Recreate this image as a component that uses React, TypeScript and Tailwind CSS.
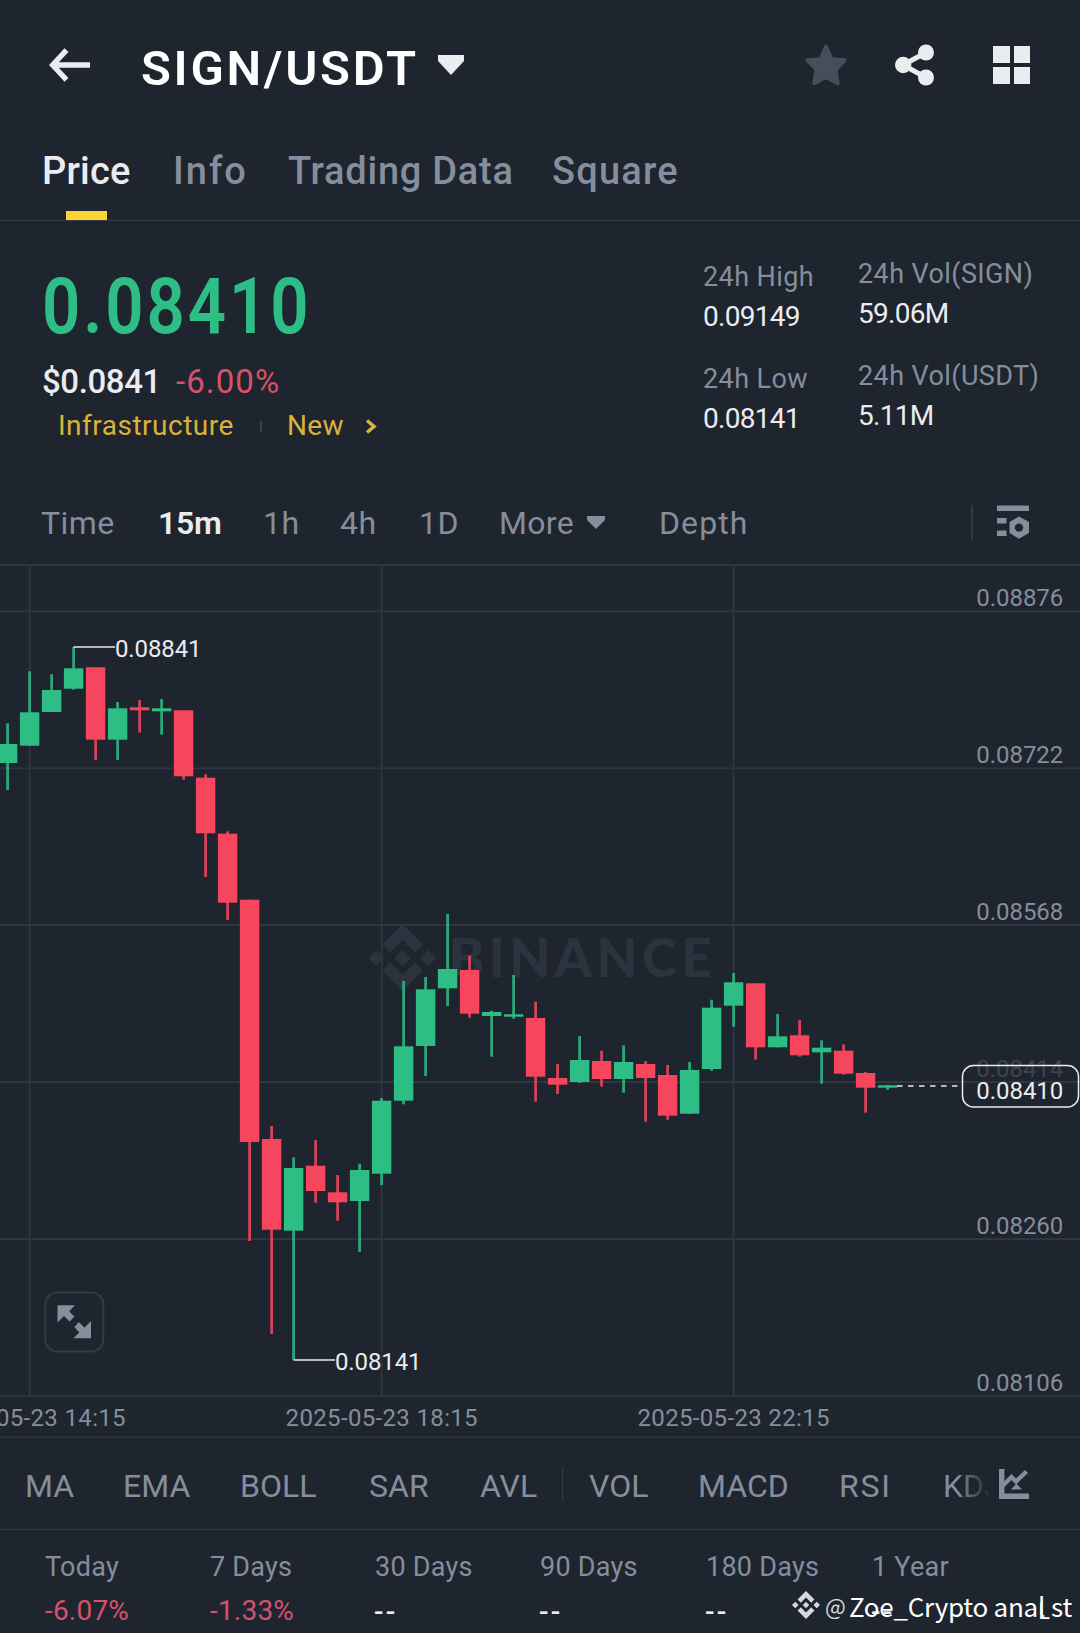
import React, { useState } from "react";

const UP = "#2ebd85";
const DOWN = "#f6465d";

type Candle = {
  up: boolean;
  high: number;
  top: number;
  bottom: number;
  low: number;
};

const c = (up: number, high: number, top: number, bottom: number, low: number): Candle => ({
  up: up === 1,
  high,
  top,
  bottom,
  low,
});

// y values are in chart space, one candle every 22 units
const candles: Candle[] = [
  c(1, 723.3, 744, 763, 790),
  c(1, 671.3, 712.3, 745.7, 745.7),
  c(1, 674.3, 690, 712, 712),
  c(1, 647, 668.3, 688.7, 689.7),
  c(0, 667.3, 667.3, 739.7, 760),
  c(1, 702, 708.3, 739.7, 760),
  c(0, 700, 707.3, 710.3, 732.7),
  c(1, 699, 708.3, 711.3, 734.7),
  c(0, 710.3, 710.3, 776.3, 779.7),
  c(0, 774.3, 777.7, 833.3, 877),
  c(0, 831.3, 833.7, 902.7, 920),
  c(0, 899.7, 899.7, 1142, 1241),
  c(0, 1126, 1139, 1229.7, 1334),
  c(1, 1157.3, 1168, 1230.7, 1360),
  c(0, 1140, 1165.7, 1191, 1202.7),
  c(0, 1175, 1192.3, 1202.3, 1220.7),
  c(1, 1163.7, 1170, 1201, 1252),
  c(1, 1098, 1100.7, 1173.7, 1185),
  c(1, 981, 1046.3, 1100.7, 1104.3),
  c(1, 977, 989.3, 1046, 1076),
  c(1, 914, 969, 988.3, 1006),
  c(0, 955.7, 970, 1013.7, 1017.7),
  c(1, 1010.7, 1012, 1016, 1056.7),
  c(1, 975, 1014.3, 1016.7, 1018.7),
  c(0, 1001.7, 1018, 1076.7, 1101.7),
  c(0, 1064, 1078, 1084.7, 1094),
  c(1, 1036, 1060, 1082, 1083),
  c(0, 1050.7, 1061, 1079, 1086.7),
  c(1, 1045.3, 1062, 1079, 1092.7),
  c(0, 1061, 1064, 1078, 1121.7),
  c(0, 1065, 1075, 1115.7, 1119.7),
  c(1, 1062, 1070, 1113.7, 1113.7),
  c(1, 999.7, 1007.7, 1069, 1070.7),
  c(1, 973, 982.3, 1005.7, 1026.7),
  c(0, 983.3, 983.3, 1047.3, 1059.7),
  c(1, 1014, 1036.3, 1047.3, 1047.3),
  c(0, 1020, 1035.3, 1055.3, 1056.7),
  c(1, 1040.3, 1047.7, 1052.3, 1083.7),
  c(0, 1044.3, 1050.7, 1073.7, 1074.7),
  c(0, 1072, 1073, 1087.7, 1112.7),
  c(1, 1085.3, 1085.3, 1087.7, 1089.7),
];

const gridRows = [
  { y: 611.3, label: "0.08876" },
  { y: 768.3, label: "0.08722" },
  { y: 925, label: "0.08568" },
  { y: 1082, label: "0.08414" },
  { y: 1239, label: "0.08260" },
  { y: 1396, label: "0.08106" },
];

const gridCols = [
  { x: 29.6, label: "2025-05-23 14:15" },
  { x: 381.6, label: "2025-05-23 18:15" },
  { x: 733.5, label: "2025-05-23 22:15" },
];

const tabs = [
  { name: "Price", box: "w-[131px]", text: "tracking-[0.2px]" },
  { name: "Info", box: "w-[115px]", text: "tracking-[2px]" },
  { name: "Trading Data", box: "w-[264px]", text: "tracking-[0.75px]" },
  { name: "Square", box: "w-[140px]", text: "tracking-[1.2px]" },
];

const intervals = [
  { name: "Time", box: "w-[117px]" },
  { name: "15m", box: "w-[105px]" },
  { name: "1h", box: "w-[77px]" },
  { name: "4h", box: "w-[79px]" },
  { name: "1D", box: "w-[80px]" },
];

const mainIndicators = [
  { name: "MA", box: "w-[98px]" },
  { name: "EMA", box: "w-[117px]" },
  { name: "BOLL", box: "w-[129px]" },
  { name: "SAR", box: "w-[111px]" },
  { name: "AVL", box: "w-[82px]" },
];

const subIndicators = [
  { name: "VOL", box: "w-[109px]" },
  { name: "MACD", box: "w-[141px]" },
  { name: "RSI", box: "w-[104px] tracking-[1.8px]" },
];

const periods = [
  { name: "Today", value: "-6.07%", box: "w-[165px]" },
  { name: "7 Days", value: "-1.33%", box: "w-[165px]" },
  { name: "30 Days", value: "--", box: "w-[165px]" },
  { name: "90 Days", value: "--", box: "w-[166px]" },
  { name: "180 Days", value: "--", box: "w-[166px]" },
  { name: "1 Year", value: "--", box: "w-[100px]" },
];

function BinanceMark({ className }: { className?: string }) {
  return (
    <svg viewBox="0 0 68 68" className={className} fill="currentColor">
      <path d="M34 0 L54.5 20.5 L46.5 28.5 L34 16 L21.5 28.5 L13.5 20.5 Z" />
      <path d="M34 68 L54.5 47.5 L46.5 39.5 L34 52 L21.5 39.5 L13.5 47.5 Z" />
      <path d="M34 26 L42 34 L34 42 L26 34 Z" />
      <path d="M8 26 L16 34 L8 42 L0 34 Z" />
      <path d="M60 26 L68 34 L60 42 L52 34 Z" />
    </svg>
  );
}

function Caret({ className }: { className?: string }) {
  return (
    <svg viewBox="0 0 26 20" className={className} fill="currentColor" preserveAspectRatio="none">
      <path d="M0 0 H26 V6 L13 20 L0 6 Z" />
    </svg>
  );
}

function Header() {
  return (
    <header className="flex h-[130px] items-center pl-[49px] pr-[50px]">
      <svg viewBox="0 0 41 34" className="h-[34px] w-[41px] shrink-0 text-[#eaecef]" fill="none" stroke="currentColor" strokeWidth="5.4">
        <path d="M41 17 H4 M17.5 2.2 L3.6 17 L17.5 31.8" />
      </svg>
      <h1 className="ml-[51px] w-[297px] whitespace-nowrap pt-[6px] text-[49px] font-semibold leading-none tracking-[2.7px] text-white">
        SIGN/USDT
      </h1>
      <Caret className="h-5 w-[26px] text-[#eaecef]" />
      <div className="ml-auto flex items-center">
        <svg viewBox="0 0 42 42" className="h-[42px] w-[42px] text-[#474d5a]" fill="currentColor" stroke="currentColor" strokeWidth="4" strokeLinejoin="round">
          <path d="M21 2.5 L26.5 15.2 L39.6 16.2 L30.5 25.6 L32.7 39.2 L21 33 L9.3 39.2 L11.5 25.6 L2.4 16.2 L15.5 15.2 Z" />
        </svg>
        <svg viewBox="0 0 40 42" className="ml-12 h-[42px] w-10 text-[#eaecef]" fill="currentColor" stroke="currentColor">
          <path d="M31 8.5 L8 21 L31 33.5" fill="none" strokeWidth="5" />
          <circle cx="31" cy="8.5" r="8" stroke="none" />
          <circle cx="8.2" cy="21" r="8.2" stroke="none" />
          <circle cx="31" cy="33.5" r="8" stroke="none" />
        </svg>
        <div className="ml-[58px] grid grid-cols-2 gap-1">
          <span className="h-[17px] w-[16.5px] bg-[#eaecef]" />
          <span className="h-[17px] w-[16.5px] bg-[#eaecef]" />
          <span className="h-[17px] w-[16.5px] bg-[#eaecef]" />
          <span className="h-[17px] w-[16.5px] bg-[#eaecef]" />
        </div>
      </div>
    </header>
  );
}

function Tabs() {
  const [active, setActive] = useState("Price");
  return (
    <nav className="flex h-[91px] border-b border-[#333b47] pl-[42px]">
      {tabs.map((tab) => (
        <button
          key={tab.name}
          onClick={() => setActive(tab.name)}
          className={`flex flex-col items-start text-left ${tab.box}`}
        >
          <span className="flex flex-col items-center">
            <span
              className={`flex h-[81px] items-center whitespace-nowrap pt-[2px] text-[38px] font-medium ${tab.text} ${
                active === tab.name ? "text-[#eaecef]" : "text-[#848e9c]"
              }`}
            >
              {tab.name}
            </span>
            {active === tab.name && <span className="h-[9px] w-[41px] bg-[#fcd535]" />}
          </span>
        </button>
      ))}
    </nav>
  );
}

function Stat({ label, value }: { label: string; value: string }) {
  return (
    <div className="h-[102px] whitespace-nowrap">
      <div className="text-[27px] leading-10 tracking-[0.4px] text-[#848e9c]">{label}</div>
      <div className="text-[28px] leading-10 tracking-[-0.7px] text-[#eaecef]">{value}</div>
    </div>
  );
}

function PriceSummary() {
  return (
    <section className="flex h-[259px] pl-[42px]">
      <div className="w-[661px] pt-[46px]">
        <div className="h-20 origin-left scale-x-[0.86] whitespace-nowrap text-[78px] font-semibold leading-[80px] tracking-[3.4px] text-[#2ebd85]">
          0.08410
        </div>
        <div className="mt-[6px] flex h-12 items-center pt-[10px] text-[33px]">
          <span className="w-[134px] font-medium tracking-[-0.4px] text-[#eaecef]">$0.0841</span>
          <span className="tracking-[1.1px] text-[#d9506a]">-6.00%</span>
        </div>
        <div className="mt-[3px] flex h-10 items-center pl-4 pt-1 text-[28px] text-[#d9b23a]">
          <span className="w-[202px] tracking-[0.5px]">Infrastructure</span>
          <span className="h-[11px] w-[2px] bg-[#3a424e]" />
          <span className="ml-[25px] w-[78px] tracking-[0.3px]">New</span>
          <svg viewBox="0 0 12 15" className="h-[15px] w-3" fill="none" stroke="currentColor" strokeWidth="3.6">
            <path d="M2 1.5 L9 7.5 L2 13.5" />
          </svg>
        </div>
      </div>
      <div className="w-[155px] pt-[36px]">
        <Stat label="24h High" value="0.09149" />
        <Stat label="24h Low" value="0.08141" />
      </div>
      <div className="pt-[33px]">
        <Stat label="24h Vol(SIGN)" value="59.06M" />
        <Stat label="24h Vol(USDT)" value="5.11M" />
      </div>
    </section>
  );
}

function IntervalBar() {
  const [active, setActive] = useState("15m");
  return (
    <div className="flex h-[84px] items-center pl-[41px] pr-[51px] text-[32px] text-[#848e9c]">
      {intervals.map((item) => (
        <button
          key={item.name}
          onClick={() => setActive(item.name)}
          className={`pt-[2px] text-left ${item.box} ${
            active === item.name ? "font-semibold tracking-[-0.3px] text-[#eaecef]" : "tracking-[0.4px]"
          }`}
        >
          {item.name}
        </button>
      ))}
      <span className="w-[88px] pt-[2px] tracking-[0.3px]">More</span>
      <Caret className="h-[13px] w-[18px]" />
      <span className="ml-[54px] pt-[2px] tracking-[1.1px]">Depth</span>
      <span className="ml-auto h-[34px] w-[2px] bg-[#333b47]" />
      <svg viewBox="0 0 32 34" className="ml-6 h-[34px] w-8" fill="currentColor">
        <path d="M0 0.5 H32 V6 H0 Z M0 13 H9.5 V18.5 H0 Z M0 25.5 H9.5 V31 H0 Z" />
        <path
          fillRule="evenodd"
          d="M22 11.5 L32 17 V28 L22 33.8 L12.5 28 V17 Z M22 18.4 A4.2 4.2 0 1 0 22 26.8 A4.2 4.2 0 1 0 22 18.4 Z"
        />
      </svg>
    </div>
  );
}

function CandleChart() {
  return (
    <svg viewBox="0 564 1080 874" className="block h-[874px] w-full" fontFamily="Roboto, sans-serif" fontSize="24">
      {/* grid */}
      <g stroke="#2f3641" strokeWidth="1.8">
        <line x1="0" x2="1080" y1="564.9" y2="564.9" />
        {gridRows.map((row) => (
          <line key={row.label} x1="0" x2="1080" y1={row.y} y2={row.y} />
        ))}
        {gridCols.map((col) => (
          <line key={col.label} x1={col.x} x2={col.x} y1="565" y2="1396" />
        ))}
        <line x1="0" x2="1080" y1="1437.2" y2="1437.2" strokeWidth="1.4" />
      </g>

      {/* brand behind the candles */}
      <g fill="#2d333e">
        <g transform="translate(368.5 924)">
          <path d="M34 0 L54.5 20.5 L46.5 28.5 L34 16 L21.5 28.5 L13.5 20.5 Z" />
          <path d="M34 67 L54.5 46.5 L46.5 38.5 L34 51 L21.5 38.5 L13.5 46.5 Z" />
          <path d="M34 26 L42 34 L34 42 L26 34 Z M8 26 L16 34 L8 42 L0 34 Z M60 26 L68 34 L60 42 L52 34 Z" />
        </g>
        <text x="449" y="977.3" fontFamily="Lato, sans-serif" fontWeight="900" fontSize="53" textLength="263">
          BINANCE
        </text>
      </g>

      {/* axis labels */}
      <g fill="#848e9c">
        {gridRows.map((row) => (
          <text
            key={row.label}
            x="976.3"
            y={row.y - 5.4}
            textLength="87"
            fill={row.label === "0.08414" ? "#3d4450" : "#848e9c"}
          >
            {row.label}
          </text>
        ))}
        {gridCols.map((col) => (
          <text key={col.label} x={col.x - 96} y="1426" textLength="192">
            {col.label}
          </text>
        ))}
      </g>

      {candles.map((k, i) => {
        const x = 7.6 + i * 22;
        return (
          <g key={i} fill={k.up ? UP : DOWN}>
            <rect x={x - 1.4} y={k.high} width="2.8" height={k.low - k.high} opacity="0.85" />
            <rect x={x - 9.7} y={k.top} width="19.4" height={k.bottom - k.top} />
          </g>
        );
      })}

      {/* high and low callouts */}
      <g stroke="#eaecef" strokeWidth="1.5">
        <line x1="73.6" x2="115" y1="647" y2="647" />
        <line x1="293.6" x2="335" y1="1360" y2="1360" />
      </g>
      <g fill="#eaecef">
        <text x="115" y="657" textLength="86.5">
          0.08841
        </text>
        <text x="335" y="1370" textLength="86.5">
          0.08141
        </text>
      </g>

      {/* last price */}
      <line x1="897" x2="960" y1="1086" y2="1086" stroke="#eaecef" strokeWidth="1.6" strokeDasharray="5.5 5.5" />
      <rect x="962.5" y="1065.5" width="116" height="41.5" rx="11" fill="none" stroke="#eaecef" strokeWidth="1.5" />
      <text x="976.3" y="1099.2" textLength="87" fill="#eaecef">
        0.08410
      </text>

      {/* expand */}
      <rect x="45.3" y="1292.5" width="58" height="59" rx="12" fill="none" stroke="#333b47" strokeWidth="2" />
      <g fill="#848e9c">
        <path d="M57.5 1305.3 H75 L69.2 1311.2 L74.3 1316.6 L69.6 1321.6 L64 1316 L57.5 1322.5 Z" />
        <path d="M91 1338.3 H73.5 L79.3 1332.4 L74.3 1327 L78.8 1322 L84.5 1327.6 L91 1321 Z" />
      </g>
    </svg>
  );
}

function IndicatorBar() {
  return (
    <div className="flex h-[92px] items-center border-b border-[#333b47] pl-[25px] pr-[51px] text-[32px] text-[#848e9c]">
      {mainIndicators.map((item) => (
        <span key={item.name} className={`pt-1 ${item.box}`}>
          {item.name}
        </span>
      ))}
      <span className="h-[34px] w-px bg-[#333b47]" />
      <span className="w-[26px]" />
      {subIndicators.map((item) => (
        <span key={item.name} className={`pt-1 ${item.box}`}>
          {item.name}
        </span>
      ))}
      <span className="w-[48px] overflow-hidden bg-gradient-to-r from-[#848e9c] from-30% to-[#1f252f] bg-clip-text pt-1 text-transparent">
        KDJ
      </span>
      <svg viewBox="0 0 30 30" className="ml-auto h-[30px] w-[30px] shrink-0" fill="currentColor">
        <path d="M0 0 H5.4 V24.6 H30 V30 H0 Z" />
        <path d="M4 16.5 L12.5 8 L17 12.5 L27.5 2.5" fill="none" stroke="currentColor" strokeWidth="4.4" />
        <path d="M17.5 14.5 L23 20.5 H12 Z" />
      </svg>
    </div>
  );
}

function Performance() {
  return (
    <section className="relative flex h-[103px] overflow-hidden whitespace-nowrap pl-[45px]">
      {periods.map((p) => (
        <div key={p.name} className={`shrink-0 pt-[17px] ${p.box}`}>
          <div className="text-[27px] leading-10 tracking-[0.25px] text-[#848e9c]">{p.name}</div>
          {p.value === "--" ? (
            <div className="-ml-px pt-[5px] text-[28px] font-medium leading-10 tracking-[2.2px] text-[#eaecef]">--</div>
          ) : (
            <div className="pt-1 text-[28px] leading-10 tracking-[0.2px] text-[#d9506a]">{p.value}</div>
          )}
        </div>
      ))}
      {/* author tag sits over the last column */}
      <div className="absolute left-[792px] top-[55px] flex h-10 items-center font-['Noto_Sans_CJK_SC',sans-serif] text-[26px] text-white">
        <BinanceMark className="h-7 w-7 shrink-0 text-[#d5d8dc]" />
        <span className="ml-[5px] w-[24px] shrink-0 text-[22px] text-[#d5d8dc]">@</span>
        <span className="w-[189px] shrink-0 tracking-[-0.25px]">Zoe_Crypto anal</span>
        <span className="w-[13px] shrink-0 translate-y-1 text-[22px]">L</span>
        <span>st</span>
      </div>
    </section>
  );
}

export default function App() {
  return (
    <div className="flex h-[1633px] w-[1080px] flex-col overflow-hidden bg-[#1f252f] font-['Roboto',sans-serif]">
      <Header />
      <Tabs />
      <PriceSummary />
      <IntervalBar />
      <CandleChart />
      <IndicatorBar />
      <Performance />
    </div>
  );
}
